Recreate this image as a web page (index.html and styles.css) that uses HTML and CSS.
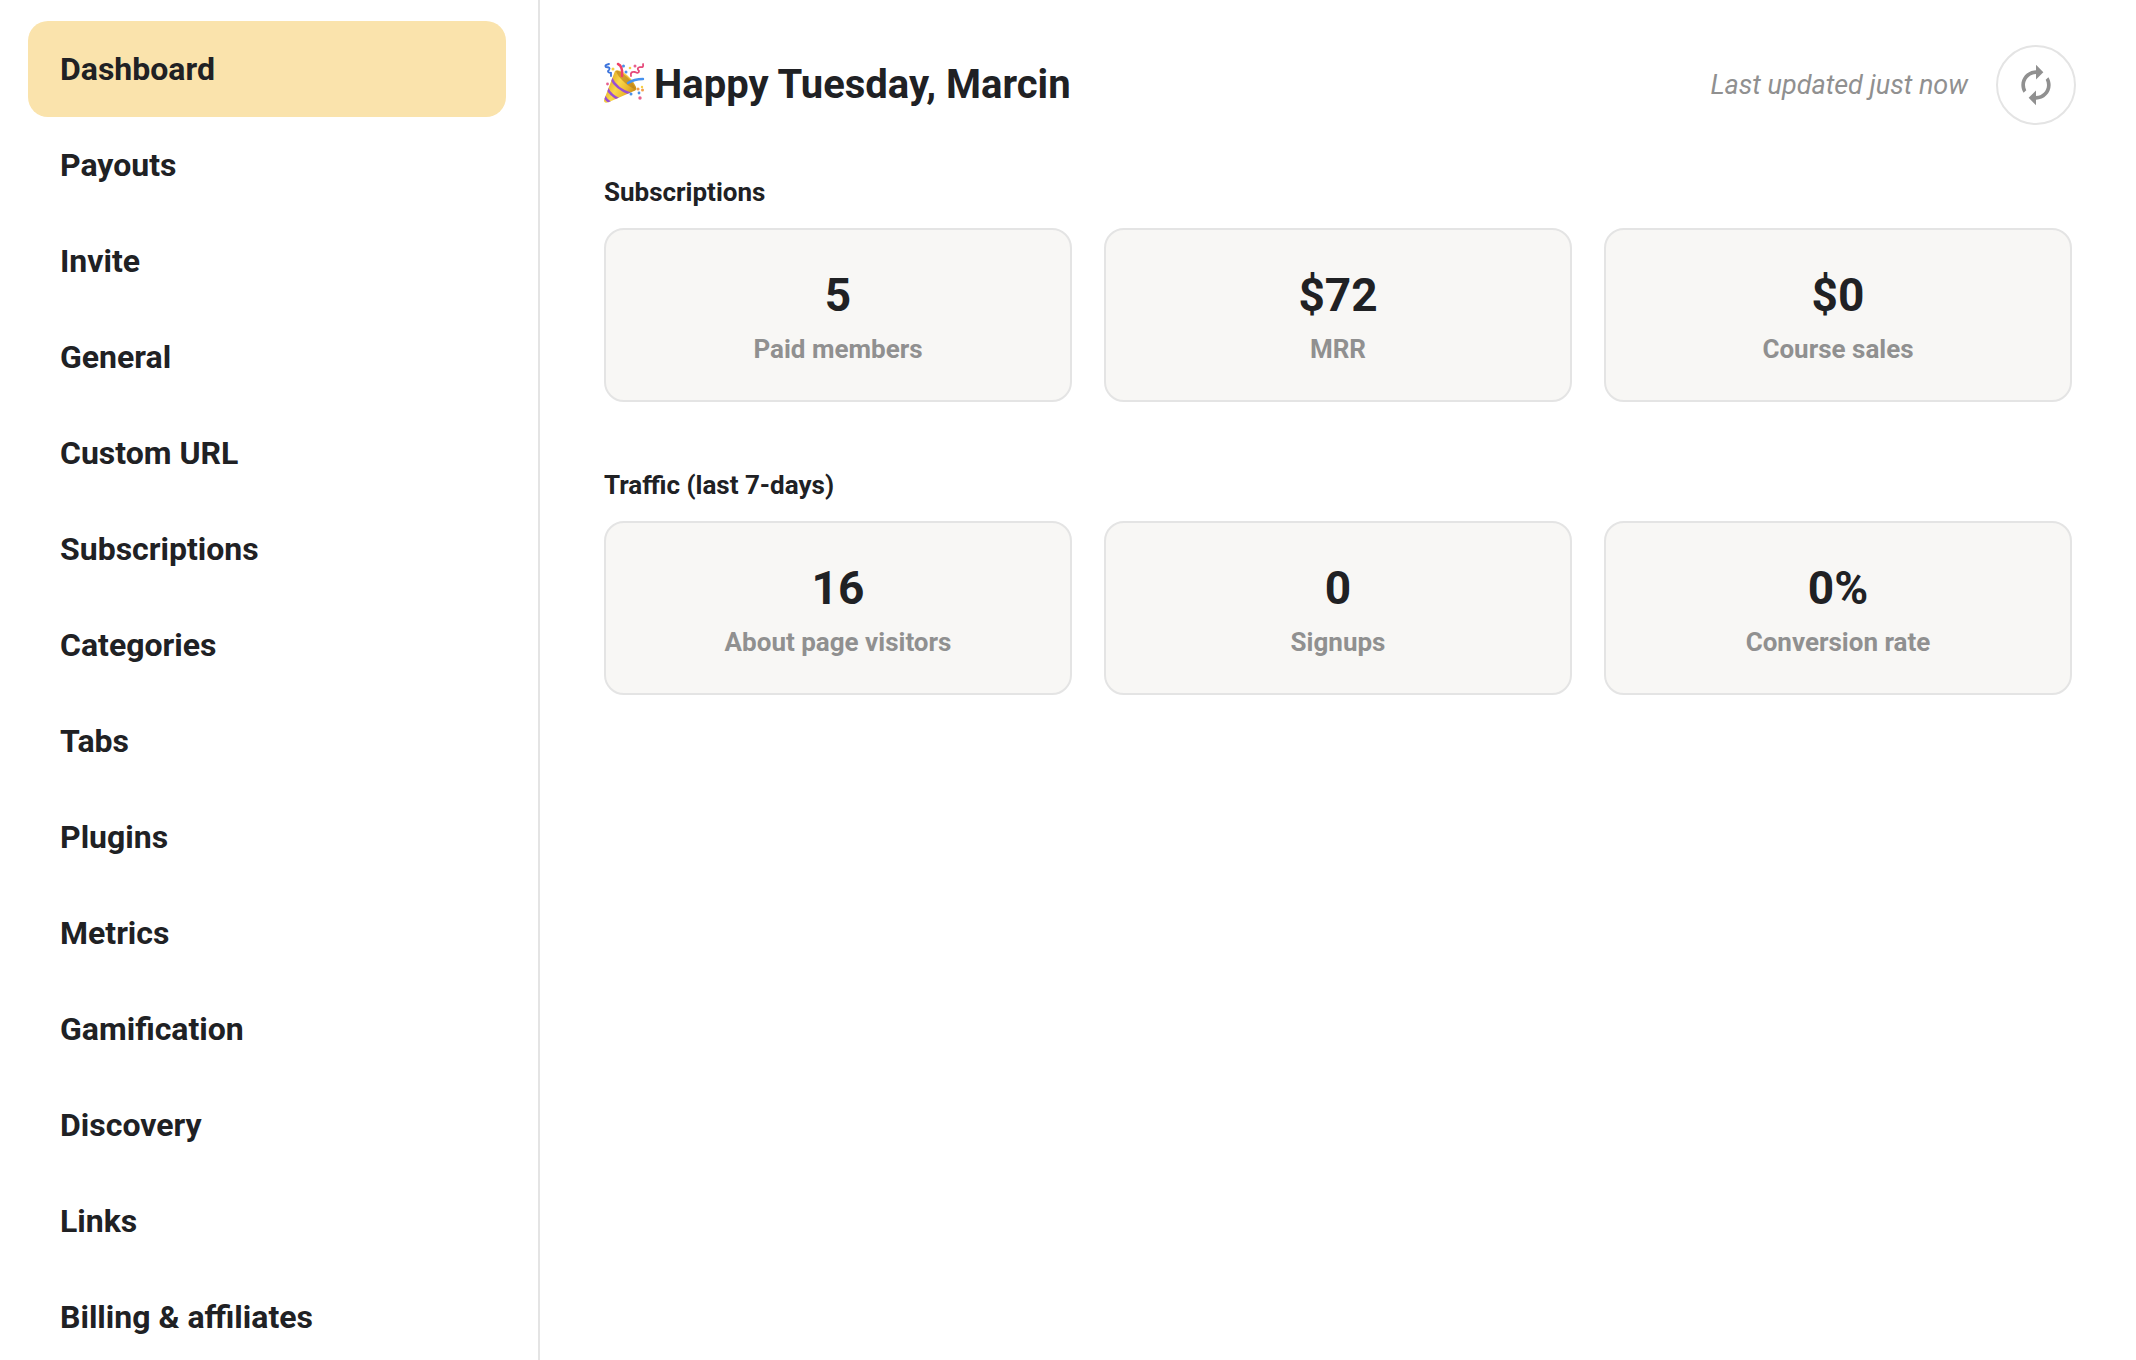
FILE: index.html
```html
<!DOCTYPE html>
<html lang="en">
<head>
<meta charset="utf-8">
<meta name="viewport" content="width=device-width, initial-scale=1">
<title>Dashboard</title>
<link rel="stylesheet" href="styles.css">
</head>
<body>
<div class="app">
  <nav class="sidebar" aria-label="Settings">
    <a class="nav-item active" href="#dashboard" aria-current="page">Dashboard</a>
    <a class="nav-item" href="#payouts">Payouts</a>
    <a class="nav-item" href="#invite">Invite</a>
    <a class="nav-item" href="#general">General</a>
    <a class="nav-item" href="#custom-url">Custom URL</a>
    <a class="nav-item" href="#subscriptions">Subscriptions</a>
    <a class="nav-item" href="#categories">Categories</a>
    <a class="nav-item" href="#tabs">Tabs</a>
    <a class="nav-item" href="#plugins">Plugins</a>
    <a class="nav-item" href="#metrics">Metrics</a>
    <a class="nav-item" href="#gamification">Gamification</a>
    <a class="nav-item" href="#discovery">Discovery</a>
    <a class="nav-item" href="#links">Links</a>
    <a class="nav-item" href="#billing">Billing &amp; affiliates</a>
  </nav>
  <main class="content">
    <header class="header">
      <h1 class="greeting">
        <svg class="party" viewBox="0 0 40 40" aria-hidden="true">
          <defs>
            <linearGradient id="cone" x1="0" y1="0.3" x2="1" y2="0.8">
              <stop offset="0" stop-color="#d99a1c"/>
              <stop offset="0.4" stop-color="#fbd84a"/>
              <stop offset="0.7" stop-color="#eab52a"/>
              <stop offset="1" stop-color="#b97a12"/>
            </linearGradient>
            <clipPath id="cone-shape"><path d="M11 8Q13 6 19 9Q28 15 32 24Q33 27 30 28L5 39Q0 41 0 37Z"/></clipPath>
          </defs>
          <path d="M11 8Q13 6 19 9Q28 15 32 24Q33 27 30 28L5 39Q0 41 0 37Z" fill="url(#cone)"/>
          <g clip-path="url(#cone-shape)" fill="none" stroke="#9a4fd0" stroke-width="2.6">
            <path d="M7 15Q12 26 27 31"/>
            <path d="M3 25Q6 32 16 37"/>
            <path d="M0 33Q2 37 7 40"/>
          </g>
          <path d="M12 8Q15 7 22 13Q30 20 31 26Q25 24 19 18Q13 12 12 8Z" fill="#b67c18" opacity="0.6"/>
          <path d="M14 1Q19 3 18 13" fill="none" stroke="#ee4168" stroke-width="2.6" stroke-linecap="round"/>
          <path d="M24 20Q30 16 39 16" fill="none" stroke="#4791ee" stroke-width="2.4" stroke-linecap="round"/>
          <path d="M5 1Q0 2 2 4Q7 4 5 7Q2 9 7 10L7 13" fill="none" stroke="#3b73dc" stroke-width="1.8" stroke-linecap="round"/>
          <path d="M39 1Q40 5 36 4Q32 5 35 8Q35 11 31 9Q26 8 27 13" fill="none" stroke="#e54a7b" stroke-width="1.8" stroke-linecap="round"/>
          <g fill="#4a91e9"><circle cx="19.500" cy="3" r="1.500"/><circle cx="22" cy="9" r="1.500"/><circle cx="27" cy="31" r="1.500"/><circle cx="35" cy="30" r="1.400"/></g>
          <g fill="#e8608d"><circle cx="31" cy="3" r="1.500"/><circle cx="3.500" cy="21" r="1.400"/><circle cx="36" cy="35" r="1.700"/></g>
          <g fill="#f6cf43"><circle cx="9" cy="6" r="1.500"/><circle cx="26" cy="5" r="1.300"/><circle cx="38" cy="24" r="1.200"/></g>
          <g fill="#f2a04c"><circle cx="34" cy="26" r="1.600"/><circle cx="38.500" cy="27" r="1.500"/></g>
        </svg>
        <span>Happy Tuesday, Marcin</span>
      </h1>
      <div class="updated">
        <span class="updated-text">Last updated just now</span>
        <button class="refresh" type="button" aria-label="Refresh">
          <svg class="refresh-icon" viewBox="0 0 24 24" aria-hidden="true"><path fill="currentColor" d="M12 6v3l4-4-4-4v3c-4.420 0-8 3.580-8 8 0 1.570.460 3.030 1.240 4.260L6.700 14.800c-.450-.830-.700-1.790-.700-2.800 0-3.310 2.690-6 6-6zm6.760 1.740L17.300 9.200c.440.840.700 1.790.700 2.800 0 3.310-2.690 6-6 6v-3l-4 4 4 4v-3c4.420 0 8-3.580 8-8 0-1.570-.460-3.030-1.240-4.260z"/></svg>
        </button>
      </div>
    </header>
    <section class="group">
      <h2 class="group-title">Subscriptions</h2>
      <div class="cards">
        <div class="card"><div class="value">5</div><div class="label">Paid members</div></div>
        <div class="card"><div class="value">$72</div><div class="label">MRR</div></div>
        <div class="card"><div class="value">$0</div><div class="label">Course sales</div></div>
      </div>
    </section>
    <section class="group">
      <h2 class="group-title">Traffic (last 7-days)</h2>
      <div class="cards">
        <div class="card"><div class="value">16</div><div class="label">About page visitors</div></div>
        <div class="card"><div class="value">0</div><div class="label">Signups</div></div>
        <div class="card"><div class="value">0%</div><div class="label">Conversion rate</div></div>
      </div>
    </section>
  </main>
</div>
</body>
</html>
```

FILE: styles.css
```css
* {
  box-sizing: border-box;
}

body {
  margin: 0;
  background: #fff;
  color: #202124;
  font-family: Roboto, "Liberation Sans", sans-serif;
}

.app {
  display: flex;
  height: 100vh;
  overflow: hidden;
}

.sidebar {
  flex: 0 0 540px;
  overflow-y: auto;
  scrollbar-width: none;
  padding: 21px 32px 0 28px;
  border-right: 2px solid #e4e4e4;
}

.nav-item {
  display: block;
  padding: 24px 32px;
  border-radius: 20px;
  color: inherit;
  font-size: 32px;
  font-weight: 700;
  line-height: 48px;
  text-decoration: none;
}

.nav-item.active {
  background: #fae3ac;
}

.content {
  flex: 1;
  min-width: 0;
  overflow-y: auto;
  padding: 45px 60px 48px 64px;
}

.header {
  display: flex;
  align-items: center;
  justify-content: space-between;
  margin-bottom: 47px;
}

.greeting {
  display: flex;
  align-items: center;
  gap: 10px;
  margin: 0;
  font-size: 40px;
  font-weight: 700;
  line-height: 48px;
}

.party {
  width: 40px;
  height: 40px;
  margin-bottom: 4px;
  overflow: visible;
}

.updated {
  display: flex;
  align-items: center;
  gap: 28px;
  color: #909090;
}

.updated-text {
  font-size: 27px;
  font-style: italic;
  line-height: 40px;
}

.refresh {
  display: flex;
  align-items: center;
  justify-content: center;
  width: 80px;
  height: 80px;
  padding: 0;
  border: 2px solid #e4e4e4;
  border-radius: 50%;
  background: #fff;
  color: #909090;
  cursor: pointer;
}

.refresh-icon {
  width: 44px;
  height: 44px;
}

.group {
  margin: 0 4px 63px 0;
}

.group-title {
  margin: 0 0 16px;
  font-size: 26px;
  font-weight: 700;
  line-height: 40px;
}

.cards {
  display: grid;
  grid-template-columns: repeat(3, 1fr);
  gap: 32px;
}

.card {
  padding: 37px 24px 31px;
  border: 2px solid #e4e4e4;
  border-radius: 20px;
  background: #f8f7f5;
  text-align: center;
}

.value {
  margin-bottom: 6px;
  font-size: 46px;
  font-weight: 700;
  line-height: 56px;
}

.label {
  color: #909090;
  font-size: 26px;
  font-weight: 700;
  line-height: 40px;
}
```
